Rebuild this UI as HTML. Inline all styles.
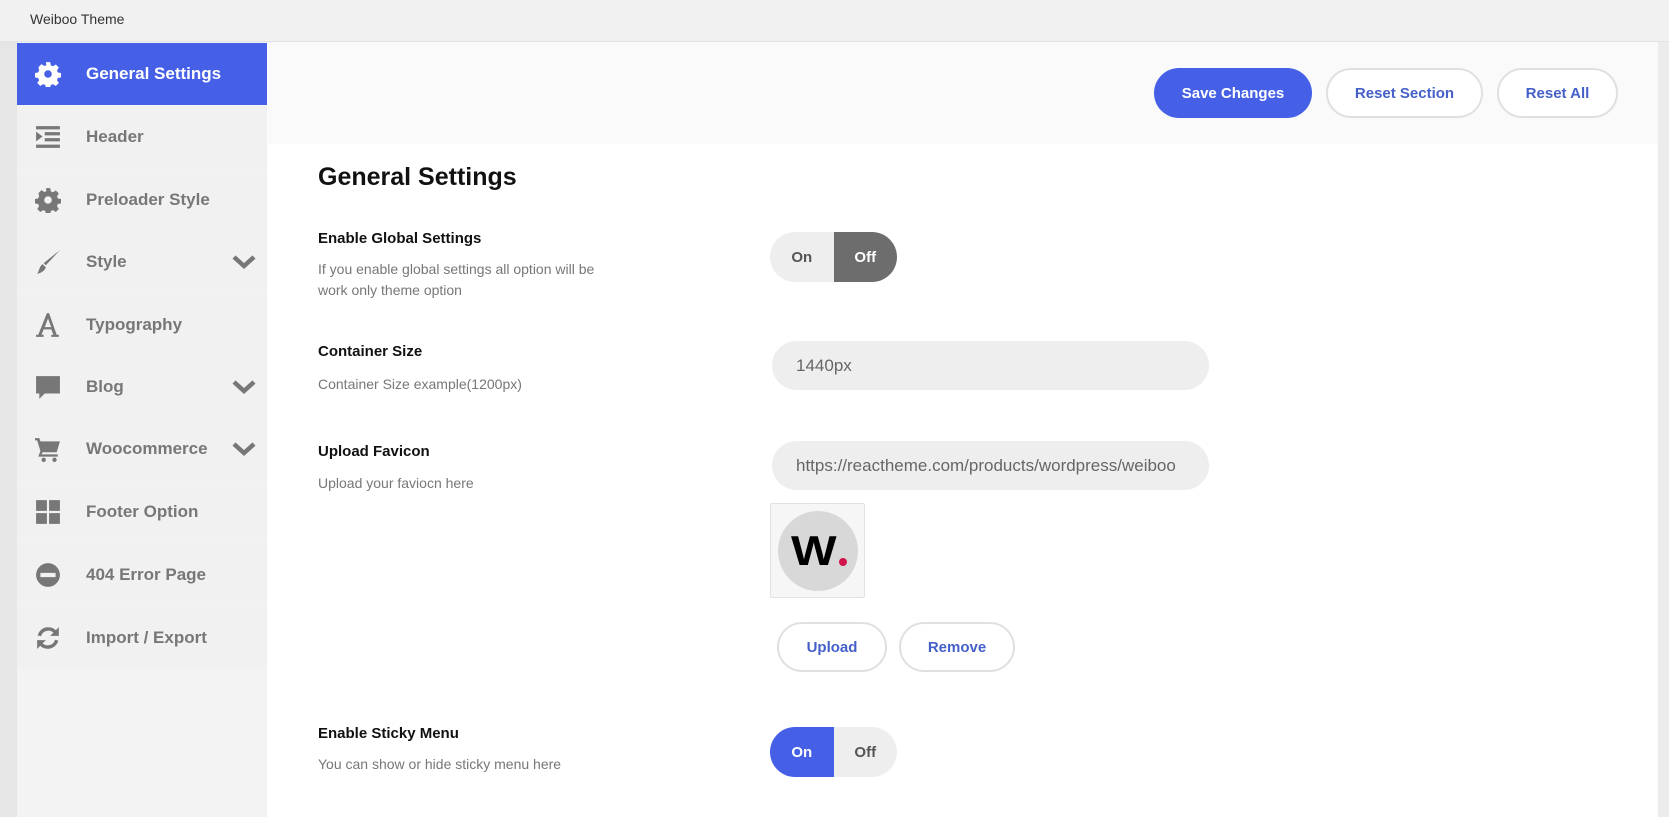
<!DOCTYPE html>
<html><head><meta charset="utf-8"><style>
*{margin:0;padding:0;box-sizing:border-box}
body{width:1669px;height:817px;overflow:hidden;background:#fff;font-family:"Liberation Sans",sans-serif;position:relative}
.abs{position:absolute}
#top{left:0;top:0;width:1669px;height:42px;background:#f1f1f1;border-bottom:1px solid #e2e2e2}
#top span{position:absolute;left:30px;top:11px;font-size:14px;color:#333}
#strip{left:0;top:42px;width:17px;height:775px;background:#e6e6e6}
#side{left:17px;top:42px;width:250px;height:775px;background:#f3f3f3}
.item{position:absolute;left:17px;width:250px;height:62px;background:#f1f1f1;color:#777;font-size:17px;font-weight:bold}
.item .t{position:absolute;left:69px;top:50%;transform:translateY(-50%)}
.item svg{position:absolute;left:18px;top:50%;transform:translateY(-50%)}
.item .chev{left:auto;right:10px}
.act{background:#4560e6;color:#fff}
#band{left:268px;top:42px;width:1390px;height:102px;background:#fafafa}
#sb{left:1658px;top:42px;width:11px;height:775px;background:#ececec}
.btn{position:absolute;height:50px;border-radius:25px;font-size:15px;font-weight:bold;display:flex;align-items:center;justify-content:center}
.ob{border:2px solid #e0e0e0;color:#4560c8;background:#fff}
h1{position:absolute;left:318px;top:163px;font-size:25px;font-weight:bold;color:#111}
.lab{position:absolute;left:318px;font-size:15px;font-weight:bold;color:#111}
.desc{position:absolute;left:318px;font-size:14px;color:#777;line-height:21px}
.tog{position:absolute;width:127px;height:50px;border-radius:25px;overflow:hidden;display:flex;font-size:15px;font-weight:bold}
.tog div{width:50%;display:flex;align-items:center;justify-content:center}
.inp{position:absolute;left:772px;width:437px;height:49px;border-radius:25px;background:#eee;color:#666;font-size:17px;padding-left:24px;display:flex;align-items:center;overflow:hidden;white-space:nowrap}
</style></head><body>
<div id="top" class="abs"><span>Weiboo Theme</span></div>
<div id="strip" class="abs"></div>
<div id="side" class="abs"></div>
<div class="item act" style="top:43px"><svg width="26" height="26" viewBox="0 0 24 24"><path fill="#fff" d="M10 1h4l.6 3 2 .9 2.6-1.7 2.8 2.8-1.7 2.6.8 2 3 .5v4l-3 .6-.8 2 1.7 2.6-2.8 2.8-2.6-1.7-2 .8-.6 3h-4l-.5-3-2-.8-2.6 1.7-2.8-2.8 1.7-2.6-.9-2-3-.6v-4l3-.5.9-2L3.2 5.7 6 2.9l2.6 1.7 2-.8zM12 8.5a3.5 3.5 0 100 7 3.5 3.5 0 000-7z"/></svg><span class="t">General Settings</span></div>
<div class="item" style="top:106px"><svg width="26" height="26" viewBox="0 0 24 24"><path fill="#777" d="M1 2h22v3H1zM9 7.5h14v3H9zM9 13h14v3H9zM1 19h22v3H1zM1 7l6 4.5-6 4.5z"/></svg><span class="t">Header</span></div>
<div class="item" style="top:169px"><svg width="26" height="26" viewBox="0 0 24 24"><path fill="#777" d="M10 1h4l.6 3 2 .9 2.6-1.7 2.8 2.8-1.7 2.6.8 2 3 .5v4l-3 .6-.8 2 1.7 2.6-2.8 2.8-2.6-1.7-2 .8-.6 3h-4l-.5-3-2-.8-2.6 1.7-2.8-2.8 1.7-2.6-.9-2-3-.6v-4l3-.5.9-2L3.2 5.7 6 2.9l2.6 1.7 2-.8zM12 8.5a3.5 3.5 0 100 7 3.5 3.5 0 000-7z"/></svg><span class="t">Preloader Style</span></div>
<div class="item" style="top:231px"><svg width="26" height="26" viewBox="0 0 24 24"><path fill="#777" d="M23 1L10 15l-2-2zM7 14l3 3c-1 3-4 5-8 6 2-3 2-7 5-9z"/></svg><span class="t">Style</span><svg class="chev" width="26" height="18" viewBox="0 0 26 18"><path d="M3 4l10 9 10-9" stroke="#777" stroke-width="4.5" fill="none"/></svg></div>
<div class="item" style="top:294px"><svg width="26" height="26" viewBox="0 0 24 24"><path fill="#777" d="M11 1h2l7 20h2v2h-7v-2h2l-2-5H8l-2 5h2v2H1v-2h2zM12 6l-3 8h6z"/></svg><span class="t">Typography</span></div>
<div class="item" style="top:356px"><svg width="26" height="26" viewBox="0 0 24 24"><path fill="#777" d="M1 2h22v16H9l-5 5v-5H1z"/></svg><span class="t">Blog</span><svg class="chev" width="26" height="18" viewBox="0 0 26 18"><path d="M3 4l10 9 10-9" stroke="#777" stroke-width="4.5" fill="none"/></svg></div>
<div class="item" style="top:418px"><svg width="26" height="26" viewBox="0 0 24 24"><path fill="#777" d="M0 2h4l1 3h18l-3 10H7l-1 2h15v2H3l2-5L2 4H0zM8 20a2 2 0 110 4 2 2 0 010-4zM18 20a2 2 0 110 4 2 2 0 010-4z"/></svg><span class="t">Woocommerce</span><svg class="chev" width="26" height="18" viewBox="0 0 26 18"><path d="M3 4l10 9 10-9" stroke="#777" stroke-width="4.5" fill="none"/></svg></div>
<div class="item" style="top:481px"><svg width="26" height="26" viewBox="0 0 24 24"><path fill="#777" d="M1 1h10v10H1zM13 1h10v10H13zM1 13h10v10H1zM13 13h10v10H13z"/></svg><span class="t">Footer Option</span></div>
<div class="item" style="top:544px"><svg width="26" height="26" viewBox="0 0 24 24"><path fill="#777" d="M12 1a11 11 0 110 22 11 11 0 010-22zM5 10v4h14v-4z"/></svg><span class="t">404 Error Page</span></div>
<div class="item" style="top:607px"><svg width="26" height="26" viewBox="0 0 24 24"><path fill="none" stroke="#777" stroke-width="3.2" d="M4 10a8.5 8.5 0 0115-3M20 14a8.5 8.5 0 01-15 3"/><path fill="#777" d="M22 2v8h-8zM2 22v-8h8z"/></svg><span class="t">Import / Export</span></div>

<div id="band" class="abs"></div>
<div id="sb" class="abs"></div>
<div class="btn" style="left:1154px;top:68px;width:158px;background:#4560e6;color:#fff">Save Changes</div>
<div class="btn ob" style="left:1326px;top:68px;width:157px">Reset Section</div>
<div class="btn ob" style="left:1497px;top:68px;width:121px">Reset All</div>

<h1>General Settings</h1>
<div class="lab" style="top:230px">Enable Global Settings</div>
<div class="desc" style="top:259px">If you enable global settings all option will be<br>work only theme option</div>
<div class="tog" style="left:770px;top:232px"><div style="background:#eee;color:#555">On</div><div style="background:#6d6d6d;color:#fff">Off</div></div>

<div class="lab" style="top:343px">Container Size</div>
<div class="desc" style="top:374px">Container Size example(1200px)</div>
<div class="inp" style="top:341px">1440px</div>

<div class="lab" style="top:443px">Upload Favicon</div>
<div class="desc" style="top:473px">Upload your faviocn here</div>
<div class="inp" style="top:441px">https://reactheme.com/products/wordpress/weiboo</div>
<div class="abs" style="left:770px;top:503px;width:95px;height:95px;border:1px solid #e2e2e2;background:#f6f6f6;border-radius:2px">
 <div class="abs" style="left:7px;top:7px;width:80px;height:80px;border-radius:50%;background:#d8d8d8"></div>
 <div class="abs" style="left:20px;top:26px;font-size:42px;font-weight:bold;color:#000;line-height:42px;transform:scaleX(1.15);transform-origin:left">W</div>
 <div class="abs" style="left:68px;top:54px;width:8px;height:8px;border-radius:50%;background:#d0144a"></div>
</div>
<div class="btn ob" style="left:777px;top:622px;width:110px;font-size:15px">Upload</div>
<div class="btn ob" style="left:899px;top:622px;width:116px;font-size:15px">Remove</div>

<div class="lab" style="top:725px">Enable Sticky Menu</div>
<div class="desc" style="top:754px">You can show or hide sticky menu here</div>
<div class="tog" style="left:770px;top:727px"><div style="background:#4560e6;color:#fff">On</div><div style="background:#eee;color:#555">Off</div></div>
</body></html>
